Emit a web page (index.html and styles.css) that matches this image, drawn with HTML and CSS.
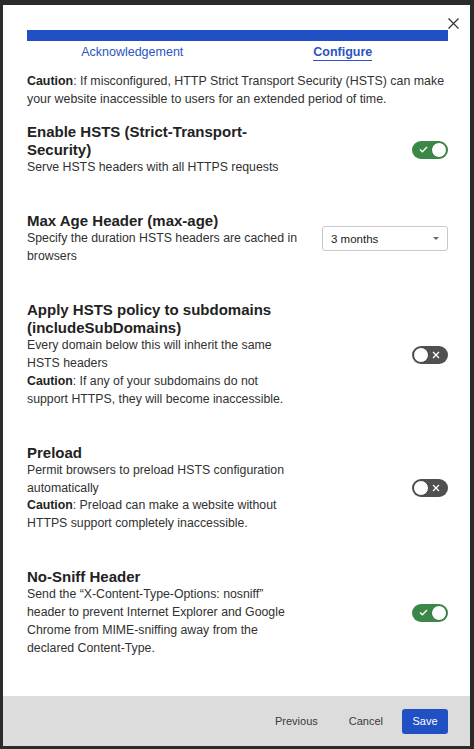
FILE: index.html
```html
<!DOCTYPE html>
<html>
<head>
<meta charset="utf-8">
<link rel="stylesheet" href="styles.css">
</head>
<body>
<div class="modal">
  <button class="close" aria-label="Close">
    <svg width="11" height="11" viewBox="0 0 11 11"><path d="M0.5 0.5L10.5 10.5M10.5 0.5L0.5 10.5" stroke="#333" stroke-width="1.2" fill="none"/></svg>
  </button>
  <div class="content">
    <div class="progress"></div>
    <div class="tabs">
      <span class="tab">Acknowledgement</span>
      <span class="tab active">Configure</span>
    </div>
    <p class="warning"><b>Caution</b>: If misconfigured, HTTP Strict Transport Security (HSTS) can make your website inaccessible to users for an extended period of time.</p>

    <div class="row">
      <div class="text">
        <h3>Enable HSTS (Strict-Transport-Security)</h3>
        <p>Serve HSTS headers with all HTTPS requests</p>
      </div>
      <div class="control">
        <span class="toggle on"><svg class="icon" width="9" height="7" viewBox="0 0 9 7"><path d="M1 3.5L3.4 5.8L8 1" stroke="#fff" stroke-width="1.3" fill="none"/></svg><span class="knob"></span></span>
      </div>
    </div>

    <div class="row">
      <div class="text">
        <h3>Max Age Header (max-age)</h3>
        <p>Specify the duration HSTS headers are cached in browsers</p>
      </div>
      <div class="control top">
        <div class="select"><span>3 months</span><span class="caret"></span></div>
      </div>
    </div>

    <div class="row">
      <div class="text">
        <h3>Apply HSTS policy to subdomains (includeSubDomains)</h3>
        <p>Every domain below this will inherit the same HSTS headers</p>
        <p><b>Caution</b>: If any of your subdomains do not support HTTPS, they will become inaccessible.</p>
      </div>
      <div class="control">
        <span class="toggle off"><span class="knob"></span><svg class="icon" width="8" height="8" viewBox="0 0 8 8"><path d="M1 1L7 7M7 1L1 7" stroke="#fff" stroke-width="1.3" fill="none"/></svg></span>
      </div>
    </div>

    <div class="row">
      <div class="text">
        <h3>Preload</h3>
        <p>Permit browsers to preload HSTS configuration automatically</p>
        <p><b>Caution</b>: Preload can make a website without HTTPS support completely inaccessible.</p>
      </div>
      <div class="control">
        <span class="toggle off"><span class="knob"></span><svg class="icon" width="8" height="8" viewBox="0 0 8 8"><path d="M1 1L7 7M7 1L1 7" stroke="#fff" stroke-width="1.3" fill="none"/></svg></span>
      </div>
    </div>

    <div class="row">
      <div class="text">
        <h3>No-Sniff Header</h3>
        <p>Send the “X-Content-Type-Options: nosniff” header to prevent Internet Explorer and Google Chrome from MIME-sniffing away from the declared Content-Type.</p>
      </div>
      <div class="control">
        <span class="toggle on"><svg class="icon" width="9" height="7" viewBox="0 0 9 7"><path d="M1 3.5L3.4 5.8L8 1" stroke="#fff" stroke-width="1.3" fill="none"/></svg><span class="knob"></span></span>
      </div>
    </div>
  </div>
  <div class="footer">
    <button class="btn link prev">Previous</button>
    <button class="btn link cancel">Cancel</button>
    <button class="btn primary">Save</button>
  </div>
</div>
</body>
</html>
```
FILE: styles.css
```css
html, body {
  margin: 0;
  padding: 0;
}
body {
  background: #2b2b2b;
  width: 474px;
  height: 749px;
  overflow: hidden;
  font-family: "Liberation Sans", Arial, sans-serif;
  color: #313131;
}
.modal {
  position: relative;
  margin: 5px 0 0 3px;
  width: 467px;
  height: 741px;
  background: #fff;
  display: flex;
  flex-direction: column;
}
.close {
  position: absolute;
  top: 13px;
  right: 11px;
  width: 11px;
  height: 11px;
  padding: 0;
  border: 0;
  background: none;
  display: flex;
}
.content {
  flex: 1;
  padding: 25px 22px 0 24px;
}
.progress {
  height: 11px;
  background: #2150c4;
}
.tabs {
  display: grid;
  grid-template-columns: 1fr 1fr;
  text-align: center;
  margin-top: 3px;
  font-size: 12.5px;
  line-height: 16px;
}
.tab {
  color: #2b55c2;
  justify-self: center;
}
.tab.active {
  font-weight: bold;
  border-bottom: 1px solid #2b55c2;
}
.warning {
  margin: 11px 0 15px;
  font-size: 12.4px;
  line-height: 18px;
}
b {
  font-weight: bold;
  color: #222;
}
.row {
  display: flex;
  justify-content: space-between;
  align-items: center;
  margin-bottom: 35.4px;
}
.text {
  width: 271px;
}
h3 {
  margin: 0;
  font-size: 15px;
  line-height: 18px;
  font-weight: bold;
  color: #222;
}
.text p {
  margin: 0;
  font-size: 12.3px;
  line-height: 17.8px;
}
.control {
  display: flex;
  justify-content: flex-end;
}
.control.top {
  align-self: flex-start;
  margin-top: 14px;
}
.toggle {
  width: 36px;
  height: 18px;
  border-radius: 9px;
  box-sizing: border-box;
  display: flex;
  align-items: center;
  justify-content: space-between;
}
.toggle.on {
  background: #3a8748;
  padding: 0 1px 0 7px;
}
.toggle.off {
  background: #505050;
  padding: 0 8px 0 1px;
}
.knob {
  width: 16px;
  height: 16px;
  border-radius: 50%;
  background: #fff;
  box-sizing: border-box;
}
.toggle.on .knob {
  border: 1px solid #2f7a3c;
}
.toggle.off .knob {
  border: 1px solid #444;
}
.select {
  width: 126px;
  height: 25px;
  box-sizing: border-box;
  border: 1px solid #c8c8c8;
  border-radius: 3px;
  display: flex;
  align-items: center;
  justify-content: space-between;
  padding: 0 8px 0 8px;
  font-size: 11.5px;
  color: #222;
}
.caret {
  width: 0;
  height: 0;
  border-left: 3px solid transparent;
  border-right: 3px solid transparent;
  border-top: 3px solid #666;
}
.footer {
  height: 50px;
  background: #dcdcdc;
  display: flex;
  justify-content: flex-end;
  align-items: center;
  padding: 0 22px 0 0;
}
.btn {
  font-family: "Liberation Sans", Arial, sans-serif;
  font-size: 11px;
  border: 0;
  background: none;
  color: #3a3a3a;
  padding: 0;
  height: 25px;
}
.btn.prev {
  margin-right: 31px;
}
.btn.cancel {
  margin-right: 19px;
}
.btn.primary {
  width: 46px;
  background: #1f50c4;
  color: #fff;
  border-radius: 3px;
}
```
